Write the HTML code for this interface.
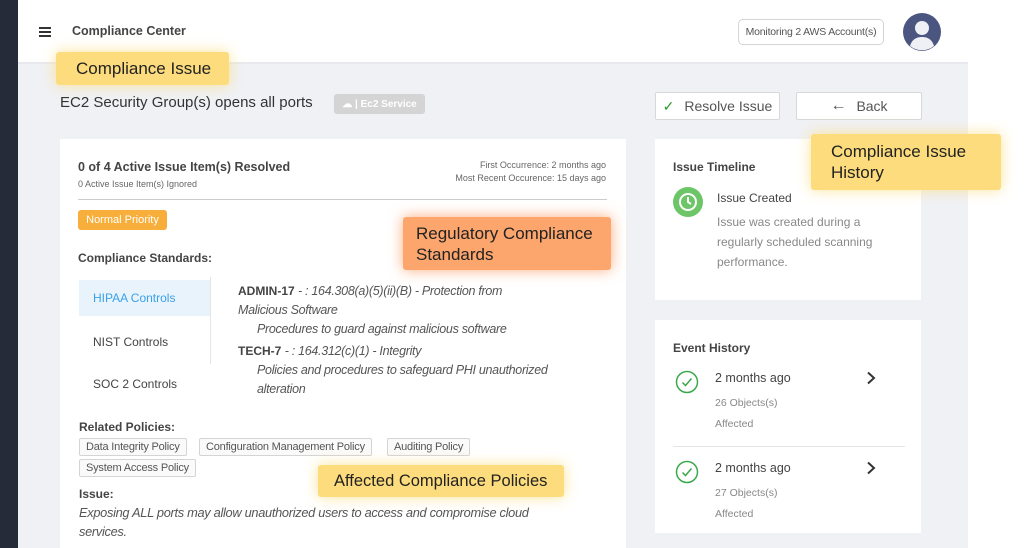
<!DOCTYPE html>
<html><head><meta charset="utf-8"><style>
*{box-sizing:border-box;margin:0;padding:0}
body{width:1024px;height:548px;overflow:hidden;background:#fff;font-family:"Liberation Sans",sans-serif;position:relative;color:#333}
.a{position:absolute}
.side{left:0;top:0;width:18px;height:548px;background:#262b3a}
.main{left:18px;top:63px;width:950px;height:485px;background:#f0f1f5}
.hdrline{left:18px;top:62px;width:950px;height:2px;background:#e8e9ee}
.card{background:#fff}
.note{font-size:17px;color:#222;padding:0 0 0 20px;display:flex;align-items:center;border-radius:3px;white-space:nowrap;line-height:21px}
.yel{background:#fcdc7c;box-shadow:0 0 14px rgba(252,220,124,.8)}
.org{background:#fca56c;box-shadow:0 0 14px rgba(252,150,90,.8)}
.btn{background:#fff;border:1px solid #d8d8d8;border-radius:2px;font-size:14px;color:#555;display:flex;align-items:center;justify-content:center;gap:10px}
.tag{display:inline-block;border:1px solid #d4d4d4;border-radius:2px;font-size:11px;color:#555;padding:2px 6px;background:#fafafa;letter-spacing:-0.2px}
.it{font-style:italic;color:#555;font-size:12.5px;letter-spacing:-0.3px}
</style></head><body>
<div class="a side"></div>
<div class="a main"></div>
<div class="a hdrline"></div>
<div class="a" style="left:39px;top:27px;width:12px;height:2px;background:#333;box-shadow:0 4px 0 #333,0 8px 0 #333"></div>
<div class="a" style="left:72px;top:24px;font-size:12.5px;font-weight:bold;color:#444">Compliance Center</div>
<div class="a" style="left:738px;top:19px;width:146px;height:26px;border:1px solid #d4d4d4;border-radius:5px;font-size:10.5px;color:#555;display:flex;align-items:center;justify-content:center;letter-spacing:-0.2px">Monitoring 2 AWS Account(s)</div>
<svg class="a" style="left:903px;top:13px" width="38" height="38" viewBox="0 0 38 38"><circle cx="19" cy="19" r="19" fill="#4a5580"/><circle cx="19" cy="15" r="7" fill="#eef0f5"/><path d="M7 33c2-7 7-9 12-9s10 2 12 9a19 19 0 0 1-24 0z" fill="#eef0f5"/></svg>
<div class="a note yel" style="left:56px;top:52px;width:173px;height:33px">Compliance Issue</div>
<div class="a" style="left:60px;top:94px;font-size:15px;color:#333">EC2 Security Group(s) opens all ports</div>
<div class="a" style="left:334px;top:94px;width:91px;height:20px;background:#d4d4d4;border-radius:3px;font-size:10px;color:#fff;font-weight:bold;display:flex;align-items:center;justify-content:center">☁ | Ec2 Service</div>
<div class="a btn" style="left:655px;top:92px;width:125px;height:28px"><span style="color:#2a9a2a">✓</span>Resolve Issue</div>
<div class="a btn" style="left:796px;top:92px;width:126px;height:28px"><span style="font-size:16px">←</span>Back</div>

<div class="a card" style="left:60px;top:139px;width:566px;height:409px"></div>
<div class="a" style="left:78px;top:160px;font-size:12.5px;font-weight:bold;color:#444">0 of 4 Active Issue Item(s) Resolved</div>
<div class="a" style="left:78px;top:179px;font-size:9px;color:#666">0 Active Issue Item(s) Ignored</div>
<div class="a" style="right:418px;top:159px;font-size:9px;color:#666;text-align:right;line-height:13px">First Occurrence: 2 months ago<br>Most Recent Occurence: 15 days ago</div>
<div class="a" style="left:78px;top:199px;width:529px;height:1px;background:#ccc"></div>
<div class="a" style="left:78px;top:210px;width:89px;height:20px;background:#f8ae3a;border-radius:3px;color:#fff;font-size:11px;display:flex;align-items:center;justify-content:center">Normal Priority</div>
<div class="a" style="left:78px;top:251px;font-size:12px;font-weight:bold;color:#444">Compliance Standards:</div>
<div class="a note org" style="left:403px;top:217px;width:208px;height:53px;padding-left:13px">Regulatory Compliance<br>Standards</div>
<div class="a" style="left:210px;top:277px;width:1px;height:87px;background:#e5e5e5"></div>
<div class="a" style="left:79px;top:280px;width:131px;height:36px;background:#e8f3fc;color:#3aa0e8;font-size:12px;padding:11px 0 0 14px">HIPAA Controls</div>
<div class="a" style="left:93px;top:335px;font-size:12px;color:#444">NIST Controls</div>
<div class="a" style="left:93px;top:377px;font-size:12px;color:#444">SOC 2 Controls</div>
<div class="a" style="left:238px;top:282px;width:350px;font-size:12px;line-height:19px;color:#444">
<div style="width:300px"><b>ADMIN-17</b> <span class="it">- : 164.308(a)(5)(ii)(B) - Protection from Malicious Software</span></div>
<div class="it" style="padding-left:19px">Procedures to guard against malicious software</div>
<div style="margin-top:3px"><b>TECH-7</b> <span class="it">- : 164.312(c)(1) - Integrity</span></div>
<div class="it" style="padding-left:19px;width:345px">Policies and procedures to safeguard PHI unauthorized alteration</div>
</div>
<div class="a" style="left:79px;top:420px;font-size:12px;font-weight:bold;color:#444">Related Policies:</div>
<div class="a" style="left:79px;top:437px"><span class="tag">Data Integrity Policy</span></div>
<div class="a" style="left:199px;top:437px"><span class="tag">Configuration Management Policy</span></div>
<div class="a" style="left:387px;top:437px"><span class="tag">Auditing Policy</span></div>
<div class="a" style="left:79px;top:458px"><span class="tag">System Access Policy</span></div>
<div class="a note yel" style="left:318px;top:465px;width:246px;height:32px;padding-left:16px;font-size:16.5px">Affected Compliance Policies</div>
<div class="a" style="left:79px;top:487px;font-size:12px;font-weight:bold;color:#444">Issue:</div>
<div class="a it" style="left:79px;top:503px;width:482px;line-height:19px;font-size:12.8px">Exposing ALL ports may allow unauthorized users to access and compromise cloud services.</div>

<div class="a card" style="left:655px;top:139px;width:266px;height:161px"></div>
<div class="a" style="left:673px;top:160px;font-size:12px;font-weight:bold;color:#444">Issue Timeline</div>
<svg class="a" style="left:673px;top:187px" width="30" height="30"><circle cx="15" cy="15" r="15" fill="#6cc566"/><circle cx="15" cy="15" r="8" fill="none" stroke="#fff" stroke-width="2"/><path d="M15 10v5l3 2" fill="none" stroke="#fff" stroke-width="2"/></svg>
<div class="a" style="left:717px;top:191px;font-size:12px;color:#444">Issue Created</div>
<div class="a" style="left:717px;top:212px;width:180px;font-size:12px;line-height:20px;color:#888">Issue was created during a regularly scheduled scanning performance.</div>
<div class="a note yel" style="left:811px;top:134px;width:190px;height:56px">Compliance Issue<br>History</div>

<div class="a card" style="left:655px;top:320px;width:266px;height:213px"></div>
<div class="a" style="left:673px;top:341px;font-size:12px;font-weight:bold;color:#444">Event History</div>
<svg class="a" style="left:675px;top:370px" width="24" height="24"><circle cx="12" cy="12" r="10.5" fill="none" stroke="#3aa84a" stroke-width="1.5"/><path d="M7.5 12.5l3 3 6-7" fill="none" stroke="#3aa84a" stroke-width="1.5"/></svg>
<div class="a" style="left:715px;top:371px;font-size:12.5px;color:#444">2 months ago</div>
<div class="a" style="left:715px;top:393px;font-size:10.5px;color:#888;line-height:21px">26 Objects(s)<br>Affected</div>
<svg class="a" style="left:865px;top:371px" width="12" height="14"><path d="M3 1.5l6 5.5-6 5.5" fill="none" stroke="#333" stroke-width="2"/></svg>
<div class="a" style="left:673px;top:446px;width:232px;height:1px;background:#e5e5e5"></div>
<svg class="a" style="left:675px;top:460px" width="24" height="24"><circle cx="12" cy="12" r="10.5" fill="none" stroke="#3aa84a" stroke-width="1.5"/><path d="M7.5 12.5l3 3 6-7" fill="none" stroke="#3aa84a" stroke-width="1.5"/></svg>
<div class="a" style="left:715px;top:461px;font-size:12.5px;color:#444">2 months ago</div>
<div class="a" style="left:715px;top:483px;font-size:10.5px;color:#888;line-height:21px">27 Objects(s)<br>Affected</div>
<svg class="a" style="left:865px;top:461px" width="12" height="14"><path d="M3 1.5l6 5.5-6 5.5" fill="none" stroke="#333" stroke-width="2"/></svg>
</body></html>
